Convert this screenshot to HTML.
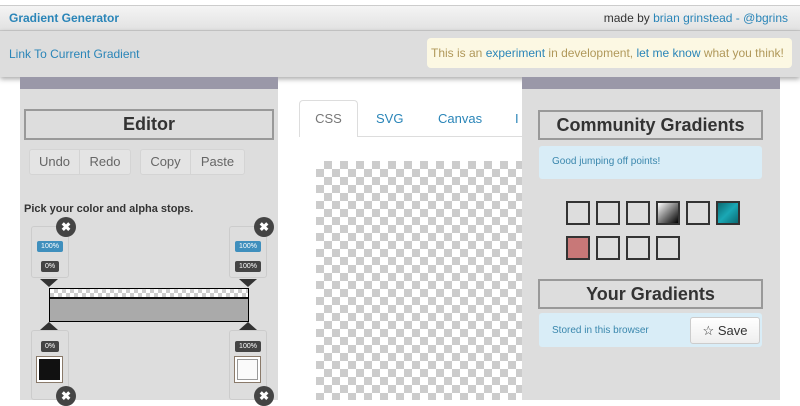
<!DOCTYPE html>
<html><head><style>
*{margin:0;padding:0;box-sizing:border-box}
body{width:800px;height:400px;overflow:hidden;background:#fff;font-family:"Liberation Sans",sans-serif;position:relative}
.a{position:absolute}
.chk{background-color:#fff;background-image:linear-gradient(45deg,#ccc 25%,transparent 25%,transparent 75%,#ccc 75%),linear-gradient(45deg,#ccc 25%,transparent 25%,transparent 75%,#ccc 75%);background-size:12px 12px;background-position:0 0,6px 6px}
.h{border:2px solid #999;background:#ddd;text-align:center;font-weight:bold;color:#333;font-size:18px;line-height:26px}
.btn{top:149px;height:26px;background:#e4e4e4;border:1px solid #d4d4d4;color:#666;font-size:13px;line-height:24px;text-align:center}
.x{width:20px;height:20px;border-radius:50%;background:#444;color:#fff;font-size:12px;font-weight:bold;text-align:center;line-height:20px}
.bd{height:11px;border-radius:2px;color:#fff;font-size:7px;line-height:11px;text-align:center;background:#444}
.box{border:1px solid #ccc;border-radius:3px;background:#ddd}
.sw{width:24px;height:24px;border:2px solid #333;background:#ddd}
.info{background:#d9edf7;border-radius:3px;color:#3a87ad;font-size:10px}
</style></head><body>
<div class="a" style="left:0;top:5px;width:800px;height:26px;background:linear-gradient(#f4f4f4,#e2e2e2);border-top:1px solid #ccc;border-bottom:1px solid #ccc"></div>
<div class="a" style="left:9px;top:11px;font-size:12px;font-weight:bold;color:#2a85b8">Gradient Generator</div>
<div class="a" style="right:12px;top:11px;font-size:12px;color:#333">made by <span style="color:#2a85b8">brian grinstead</span><span style="color:#2a85b8"> - @bgrins</span></div>
<div class="a" style="left:0;top:31px;width:800px;height:46px;background:#ddd;box-shadow:0 2px 5px rgba(0,0,0,.35)"></div>
<div class="a" style="left:9px;top:47px;font-size:12px;color:#2a85b8">Link To Current Gradient</div>
<div class="a" style="left:427px;top:38px;width:365px;height:30px;background:#fcf8e3;border-radius:4px;color:#b0985a;font-size:12px;line-height:30px;padding-left:4px">This is an <span style="color:#2a85b8">experiment</span> in development, <span style="color:#2a85b8">let me know</span> what you think!</div>

<div class="a" style="left:20px;top:77px;width:258px;height:323px;background:#ddd;border-top:12px solid #9a98a8"></div>
<div class="a h" style="left:24px;top:109px;width:250px;height:31px">Editor</div>
<div class="a btn" style="left:29px;width:51px;border-radius:3px 0 0 3px">Undo</div>
<div class="a btn" style="left:79px;width:52px;border-radius:0 3px 3px 0">Redo</div>
<div class="a btn" style="left:140px;width:51px;border-radius:3px 0 0 3px">Copy</div>
<div class="a btn" style="left:190px;width:55px;border-radius:0 3px 3px 0">Paste</div>
<div class="a" style="left:24px;top:203px;font-size:11px;font-weight:bold;color:#333">Pick your color and alpha stops.</div>

<div class="a box" style="left:31px;top:226px;width:38px;height:52px"></div>
<div class="a bd" style="left:37px;top:241px;width:26px;background:#3f8fbd">100%</div>
<div class="a bd" style="left:41px;top:261px;width:18px">0%</div>
<div class="a x" style="left:56px;top:217px">✖</div>
<div class="a box" style="left:229px;top:226px;width:38px;height:52px"></div>
<div class="a bd" style="left:235px;top:241px;width:26px;background:#3f8fbd">100%</div>
<div class="a bd" style="left:235px;top:261px;width:26px">100%</div>
<div class="a x" style="left:254px;top:217px">✖</div>
<div class="a" style="left:40px;top:279px;border:9px solid transparent;border-top:8px solid #333;border-bottom:0"></div>
<div class="a" style="left:239px;top:279px;border:9px solid transparent;border-top:8px solid #333;border-bottom:0"></div>
<div class="a" style="left:49px;top:288px;width:200px;height:34px;border:1px solid #000;background:#aaa"></div>
<div class="a chk" style="left:50px;top:289px;width:198px;height:10px;border-bottom:2px solid #111;background-size:8px 8px;background-position:0 0,4px 4px"></div>
<div class="a" style="left:40px;top:322px;border:9px solid transparent;border-bottom:8px solid #333;border-top:0"></div>
<div class="a" style="left:239px;top:322px;border:9px solid transparent;border-bottom:8px solid #333;border-top:0"></div>
<div class="a box" style="left:31px;top:330px;width:38px;height:70px"></div>
<div class="a bd" style="left:41px;top:341px;width:18px">0%</div>
<div class="a" style="left:36px;top:356px;width:27px;height:27px;border:1px solid #8a7a6a;padding:2px;background:#fff"><div style="width:100%;height:100%;background:#111"></div></div>
<div class="a x" style="left:56px;top:386px">✖</div>
<div class="a box" style="left:229px;top:330px;width:38px;height:70px"></div>
<div class="a bd" style="left:235px;top:341px;width:26px">100%</div>
<div class="a" style="left:234px;top:356px;width:27px;height:27px;border:1px solid #8a7a6a;padding:2px;background:#fff"><div style="width:100%;height:100%;background:#fafafa;border:1px solid #999"></div></div>
<div class="a x" style="left:254px;top:386px">✖</div>

<div class="a" style="left:357px;top:136px;width:165px;height:1px;background:#ddd"></div>
<div class="a" style="left:299px;top:100px;width:59px;height:37px;border:1px solid #ddd;border-bottom:none;border-radius:4px 4px 0 0;background:#fff;color:#777;font-size:13px;line-height:36px;text-align:center">CSS</div>
<div class="a" style="left:376px;top:111px;font-size:13px;color:#2a85b8">SVG</div>
<div class="a" style="left:438px;top:111px;font-size:13px;color:#2a85b8">Canvas</div>
<div class="a" style="left:515px;top:111px;font-size:13px;color:#2a85b8">I</div>
<div class="a chk" style="left:316px;top:161px;width:206px;height:239px;background-size:16px 16px;background-position:0 0,8px 8px"></div>

<div class="a" style="left:522px;top:77px;width:258px;height:323px;background:#ddd;border-top:12px solid #9a98a8"></div>
<div class="a h" style="left:538px;top:110px;width:225px;height:30px">Community Gradients</div>
<div class="a info" style="left:539px;top:146px;width:223px;height:33px;padding:10px 13px">Good jumping off points!</div>
<div class="a sw" style="left:566px;top:201px"></div>
<div class="a sw" style="left:596px;top:201px"></div>
<div class="a sw" style="left:626px;top:201px"></div>
<div class="a sw" style="left:656px;top:201px;background:linear-gradient(135deg,#fff,#000)"></div>
<div class="a sw" style="left:686px;top:201px"></div>
<div class="a sw" style="left:716px;top:201px;background:linear-gradient(135deg,#0a6a72,#1aa8b5 50%,#0a6a72)"></div>
<div class="a sw" style="left:566px;top:236px;background:#c87878"></div>
<div class="a sw" style="left:596px;top:236px"></div>
<div class="a sw" style="left:626px;top:236px"></div>
<div class="a sw" style="left:656px;top:236px"></div>
<div class="a h" style="left:538px;top:279px;width:225px;height:30px">Your Gradients</div>
<div class="a info" style="left:539px;top:313px;width:223px;height:34px;padding:12px 13px">Stored in this browser</div>
<div class="a" style="left:690px;top:317px;width:70px;height:27px;background:linear-gradient(#fff,#eee);border:1px solid #ccc;border-radius:3px;font-size:13px;color:#333;line-height:25px;text-align:center">☆ Save</div>
</body></html>
